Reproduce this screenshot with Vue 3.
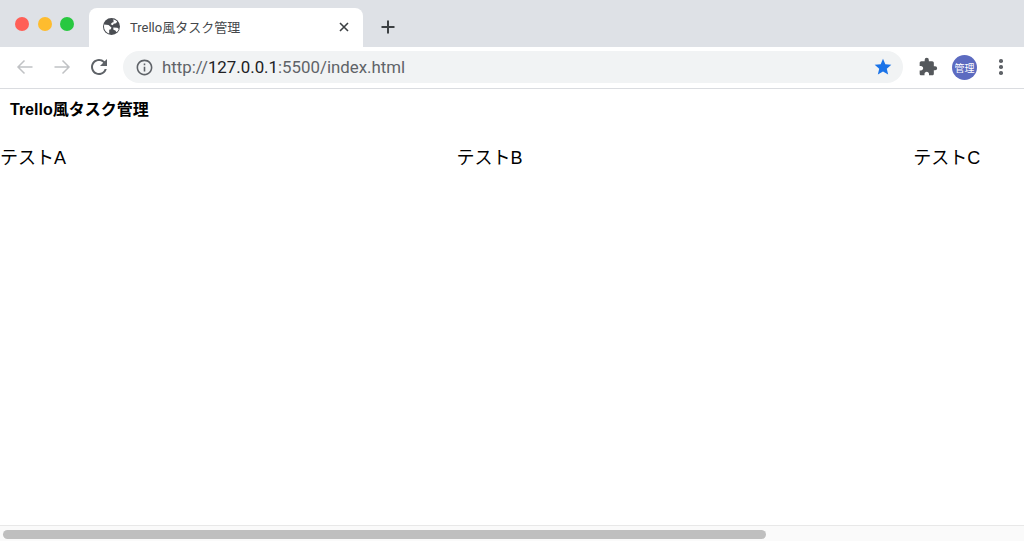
<script setup>
const columns = ['テストA', 'テストB', 'テストC']
</script>

<template>
  <div class="window">
    <div class="tabstrip">
      <div class="lights">
        <span class="light red"></span>
        <span class="light yellow"></span>
        <span class="light green"></span>
      </div>
      <div class="tab">
        <svg class="globe" width="17" height="17" viewBox="0 0 17 17">
          <circle cx="8.5" cy="8.5" r="8.5" fill="#4a4d52"/>
          <path fill="#fff" d="M1.2 6.6l4.3.4 2.9 2.4-.5 1.9-1.7.5v3.6l-1.4-.5C2.4 13.600 1 11.200 1 8.500c0-.7.1-1.300.2-1.900zM10.400 1.300c1.500.4 2.800 1.200 3.800 2.300l-1.100 1.700-2.500.5-.7 1.500-2.300-1 1.600-1.700 1.400-.4zM10.300 9.500l4 .2 1.500 1.200c-.5 1.400-1.300 2.500-2.400 3.400l-1-1.900-2-.7z"/>
        </svg>
        <span class="tab-title">Trello風タスク管理</span>
        <svg class="close" width="10" height="10" viewBox="0 0 10 10">
          <path d="M1 1l8 8M9 1l-8 8" stroke="#3c4043" stroke-width="1.6" fill="none"/>
        </svg>
      </div>
      <svg class="plus" width="14" height="14" viewBox="0 0 14 14">
        <path d="M7 0.5v13M0.5 7h13" stroke="#3c4043" stroke-width="2" fill="none"/>
      </svg>
    </div>

    <div class="toolbar">
      <svg class="nav back" width="18" height="18" viewBox="0 0 18 18">
        <path d="M16.500 9H2M8.500 2.500L2 9l6.500 6.500" stroke="#c0c2c5" stroke-width="1.5" fill="none"/>
      </svg>
      <svg class="nav forward" width="18" height="18" viewBox="0 0 18 18">
        <path d="M1.500 9H16M9.500 2.500L16 9l-6.500 6.500" stroke="#c0c2c5" stroke-width="1.5" fill="none"/>
      </svg>
      <svg class="nav reload" width="24" height="24" viewBox="0 0 24 24">
        <path fill="#5f6368" d="M17.65 6.35A7.958 7.958 0 0 0 12 4c-4.42 0-7.99 3.58-7.99 8s3.57 8 7.99 8c3.73 0 6.84-2.55 7.73-6h-2.08A5.99 5.99 0 0 1 12 18c-3.31 0-6-2.69-6-6s2.69-6 6-6c1.66 0 3.14.69 4.22 1.78L13 11h7V4l-2.35 2.35z"/>
      </svg>
      <div class="omnibox">
        <svg width="19" height="19" viewBox="0 0 24 24" class="info">
          <path fill="#5f6368" d="M11 7h2v2h-2zm0 4h2v6h-2zm1-9C6.48 2 2 6.48 2 12s4.48 10 10 10 10-4.48 10-10S17.52 2 12 2zm0 18c-4.41 0-8-3.59-8-8s3.59-8 8-8 8 3.59 8 8-3.59 8-8 8z"/>
        </svg>
        <span class="url"><span class="dim">http://</span>127.0.0.1<span class="dim">:5500/index.html</span></span>
        <svg class="star" width="20" height="20" viewBox="0 0 24 24">
          <path fill="#1a73e8" d="M12 17.27L18.18 21l-1.64-7.03L22 9.24l-7.19-.61L12 2 9.19 8.63 2 9.24l5.46 4.73L5.82 21z"/>
        </svg>
      </div>
      <svg class="puzzle" width="20" height="20" viewBox="0 0 24 24">
        <path fill="#55585c" d="M20.5 11H19V7c0-1.1-.9-2-2-2h-4V3.5a2.5 2.5 0 0 0-5 0V5H4c-1.1 0-2 .9-2 2v3.8h1.5c1.49 0 2.7 1.21 2.7 2.7s-1.21 2.7-2.7 2.7H2V20c0 1.1.9 2 2 2h3.8v-1.5c0-1.49 1.21-2.7 2.7-2.7s2.7 1.21 2.7 2.7V22H17c1.1 0 2-.9 2-2v-4h1.5a2.5 2.5 0 0 0 0-5z"/>
      </svg>
      <div class="avatar">管理</div>
      <div class="dots"><i></i><i></i><i></i></div>
    </div>

    <main class="page">
      <h1 class="heading">Trello風タスク管理</h1>
      <div class="board">
        <div v-for="c in columns" :key="c" class="column">{{ c }}</div>
      </div>
    </main>

    <div class="scrollbar"><div class="thumb"></div></div>
  </div>
</template>

<style>
html, body { margin: 0; overflow: hidden; background: #fff; }
</style>

<style scoped>
.window {
  width: 1024px;
  height: 541px;
  display: flex;
  flex-direction: column;
  overflow: hidden;
  font-family: "Liberation Sans", "Noto Sans CJK JP", sans-serif;
  color: #000;
}
.tabstrip {
  height: 47px;
  flex: none;
  background: #dee1e6;
  display: flex;
  align-items: flex-end;
}
.lights {
  display: flex;
  gap: 8.7px;
  padding: 17px 0 0 15px;
  width: 74px;
  box-sizing: border-box;
  align-self: stretch;
  align-items: flex-start;
}
.light { width: 14px; height: 14px; border-radius: 50%; flex: none; }
.red { background: #ff5f57; }
.yellow { background: #febc2e; }
.green { background: #28c840; }
.tab {
  margin-left: 15px;
  width: 274px;
  height: 39px;
  box-sizing: border-box;
  padding: 0 14px 2px 14px;
  background: #fff;
  border-radius: 8px 8px 0 0;
  display: flex;
  align-items: center;
}
.globe { flex: none; }
.tab-title {
  margin-left: 10px;
  font-family: "Roboto", "Noto Sans CJK JP", sans-serif;
  font-size: 13px;
  color: #45484c;
  flex: 1;
  white-space: nowrap;
}
.close { flex: none; }
.plus { margin: 0 0 13px 18px; flex: none; }
.toolbar {
  height: 42px;
  flex: none;
  box-sizing: border-box;
  background: #fff;
  border-bottom: 1px solid #dadce0;
  padding: 0 0 1px 16px;
  display: flex;
  align-items: center;
}
.nav { flex: none; }
.back { margin-right: 19px; }
.forward { margin-right: 15.5px; }
.reload { margin-right: 12.5px; }
.omnibox {
  width: 780px;
  height: 32px;
  flex: none;
  box-sizing: border-box;
  background: #f1f3f4;
  border-radius: 16px;
  display: flex;
  align-items: center;
  padding: 0 10px 0 12px;
}
.info { flex: none; }
.url {
  margin-left: 8px;
  flex: 1;
  font-family: "Roboto", "Liberation Sans", sans-serif;
  font-size: 16.85px;
  color: #202124;
  white-space: nowrap;
}
.dim { color: #5f6368; }
.star { flex: none; }
.puzzle { margin-left: 15px; flex: none; }
.avatar {
  margin-left: 14px;
  width: 25px;
  height: 25px;
  flex: none;
  border-radius: 50%;
  background: #5c6bc0;
  color: #fff;
  font-size: 10px;
  display: flex;
  align-items: center;
  justify-content: center;
}
.dots {
  margin-left: 22px;
  display: flex;
  flex-direction: column;
  gap: 2.5px;
  flex: none;
}
.dots i { width: 3.5px; height: 3.5px; border-radius: 50%; background: #5f6368; display: block; }
.page { flex: 1; min-height: 0; overflow: hidden; }
.heading {
  margin: 0;
  padding: 11px 0 0 10px;
  font-size: 16px;
  line-height: 19px;
  font-weight: 700;
}
.board { display: flex; margin-top: 27px; }
.column { width: 456.6px; flex: none; font-size: 18px; line-height: 24px; }
.scrollbar {
  height: 16px;
  flex: none;
  box-sizing: border-box;
  background: #fafafa;
  border-top: 1px solid #e8e8e8;
  padding: 4px 0 0 3px;
}
.thumb { width: 763px; height: 9px; border-radius: 5px; background: #bfbfbf; }
</style>
